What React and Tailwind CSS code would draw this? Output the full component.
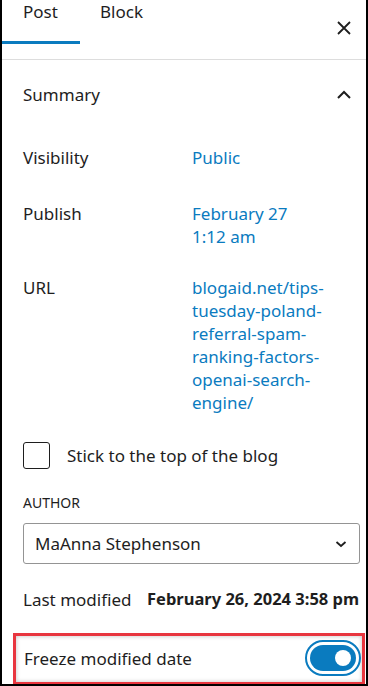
import React from 'react';

const Row = ({ label, children }) => (
  <div className="flex items-start">
    <div className="w-[169px] shrink-0 leading-[23px]">{label}</div>
    <div className="text-[#0a7bbf] leading-[23px]">{children}</div>
  </div>
);

export default function App() {
  return (
    <div
      className="w-[368px] h-[686px] bg-white border-x-2 border-b-2 border-black text-[#1e1e1e] overflow-hidden text-[17px]"
      style={{ fontFamily: '"Noto Sans", "Open Sans", sans-serif' }}
    >
      <div className="flex items-start h-[60px] border-b border-[#dddddd]">
        <div className="w-[78px] h-[44px] border-b-[3px] border-[#0a7bbf] pl-[21px] leading-[22px] pt-[1px]">
          Post
        </div>
        <div className="ml-[20px] leading-[22px] pt-[1px]">Block</div>
        <button className="ml-auto mr-[14px] mt-[20px] w-[16px] h-[16px] flex items-center justify-center">
          <svg width="16" height="16" viewBox="0 0 16 16" fill="none" stroke="#1e1e1e" strokeWidth="1.8">
            <path d="M2 2 L14 14 M14 2 L2 14" />
          </svg>
        </button>
      </div>

      <div className="flex items-center justify-between pl-[21px] pr-[14px] h-[70px]">
        <span>Summary</span>
        <svg width="16" height="10" viewBox="0 0 16 10" fill="none" stroke="#1e1e1e" strokeWidth="2">
          <path d="M2 8 L8 2 L14 8" />
        </svg>
      </div>

      <div className="pl-[21px] pr-[8px] flex flex-col">
        <div className="mt-[16px]">
          <Row label="Visibility">Public</Row>
        </div>
        <div className="mt-[33px]">
          <Row label="Publish">
            February 27
            <br />
            1:12 am
          </Row>
        </div>
        <div className="mt-[28px]">
          <Row label="URL">
            blogaid.net/tips-
            <br />
            tuesday-poland-
            <br />
            referral-spam-
            <br />
            ranking-factors-
            <br />
            openai-search-
            <br />
            engine/
          </Row>
        </div>

        <div className="flex items-center mt-[28px]">
          <div className="w-[27px] h-[27px] border border-[#1e1e1e] rounded-[3px] shrink-0" />
          <span className="ml-[17px]">Stick to the top of the blog</span>
        </div>

        <div className="mt-[25px] text-[14px] leading-[18px] uppercase">Author</div>
        <div className="mt-[11px] mr-[-2px] h-[41px] border border-[#949494] rounded-[3px] flex items-center justify-between pl-[11px] pr-[12px]">
          <span>MaAnna Stephenson</span>
          <svg width="12" height="8" viewBox="0 0 12 8" fill="none" stroke="#1e1e1e" strokeWidth="1.8">
            <path d="M1.5 2 L6 6 L10.5 2" />
          </svg>
        </div>

        <div className="flex items-center mt-[23px]">
          <span className="w-[124px] shrink-0">Last modified</span>
          <span className="font-bold whitespace-nowrap text-[16.5px]">February 26, 2024 3:58 pm</span>
        </div>
      </div>

      <div className="mt-[20px] ml-[11px] mr-[1px] h-[52px] border-[3px] border-[#e8363f] flex items-center justify-between pl-[8px] pr-[1px] shadow-[inset_0_0_4px_rgba(0,0,0,0.25)]">
        <span>Freeze modified date</span>
        <div className="w-[56px] h-[36px] rounded-full border-[2px] border-[#0a7bbf] p-[3px] mb-[2px]">
          <div className="w-full h-full rounded-full bg-[#0a7bbf] flex items-center justify-end pr-[5px]">
            <div className="w-[16px] h-[16px] rounded-full bg-white" />
          </div>
        </div>
      </div>
    </div>
  );
}
